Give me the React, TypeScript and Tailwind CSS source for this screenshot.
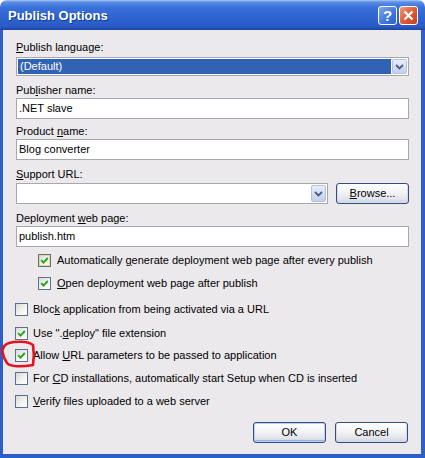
import React from "react";

function U({ c }: { c: string }) {
  return <span className="underline decoration-1 underline-offset-[1px]">{c}</span>;
}

function Box({ checked, hover }: { checked: boolean; hover?: boolean }) {
  return (
    <span className="relative w-[13px] h-[13px] shrink-0 border border-[#5A7090] bg-[linear-gradient(135deg,#D9D9D4_0%,#F4F4F2_60%,#FFFFFF_100%)] flex items-center justify-center">
      {hover && <span className="absolute inset-0 shadow-[inset_0_0_0_1px_#F6D27A]" />}
      {checked && (
        <svg width="9" height="9" viewBox="0 0 9 9" className="relative">
          <path d="M1.2 4.2 L3.5 6.6 L7.8 2" stroke="#22A31F" strokeWidth="1.9" fill="none" />
        </svg>
      )}
    </span>
  );
}

function Chevron() {
  return (
    <svg width="9" height="6" viewBox="0 0 9 6">
      <path d="M1 1 L4.5 4.5 L8 1" stroke="#4A5E82" strokeWidth="1.8" fill="none" />
    </svg>
  );
}

function DropBtn() {
  return (
    <div className="w-[15px] self-stretch rounded-[2px] border border-[#B3C1DC] bg-[linear-gradient(to_bottom,#E8EEFA,#C2D0EC)] flex items-center justify-center">
      <Chevron />
    </div>
  );
}

function XPButton({ children, def, w = "w-[73px]" }: { children: React.ReactNode; def?: boolean; w?: string }) {
  return (
    <div
      className={`${w} h-[21px] rounded-[3px] border border-[#2F4F7F] bg-[linear-gradient(to_bottom,#FFFFFF_0%,#F3F3F6_45%,#E2E4EC_80%,#C9CFDE_100%)] flex items-center justify-center text-[11px] leading-[13px] ${
        def ? "shadow-[inset_0_0_0_1px_#BCD0F2,inset_0_-1px_0_1px_#93B1E6]" : "shadow-[inset_0_-1px_0_1px_#D6DAE6]"
      }`}
    >
      {children}
    </div>
  );
}

function Label({ mt, children }: { mt: string; children: React.ReactNode }) {
  return <div className={`${mt} h-[13px] leading-[13px] whitespace-nowrap`}>{children}</div>;
}

function TextBox({ mt, value }: { mt: string; value: string }) {
  return (
    <div className={`${mt} h-[21px] border border-[#A4A9B0] bg-white flex items-center pl-[2px] leading-[13px] whitespace-nowrap`}>
      {value}
    </div>
  );
}

function Check({ mt, checked, indent, hover, children }: { mt: string; checked: boolean; indent?: boolean; hover?: boolean; children: React.ReactNode }) {
  return (
    <div className={`${mt} h-[13px] flex items-center ${indent ? "ml-[22px] gap-[6px]" : "-ml-px gap-[5px]"} leading-[13px] whitespace-nowrap`}>
      <Box checked={checked} hover={hover} />
      <span>{children}</span>
    </div>
  );
}

export default function App() {
  return (
    <div className="w-[425px] h-[458px] bg-white relative font-['Liberation_Sans',Arial,sans-serif] text-black overflow-hidden">
      {/* title bar */}
      <div className="h-[30px] rounded-t-[7px] flex items-center pl-[8px] pr-[7px] gap-[2px] bg-[linear-gradient(to_bottom,#A8C6F4_0%,#5B8FE6_7%,#3A70D9_25%,#2F63CF_60%,#2A5BC6_88%,#1C45A6_100%)]">
        <span className="flex-1 text-white font-bold text-[13px] leading-[15px] [text-shadow:1px_1px_0_#123A8F] pt-[1px]">Publish Options</span>
        <div className="w-[19px] h-[19px] rounded-[3px] border border-white bg-[linear-gradient(135deg,#7DAAF2_0%,#3C75DD_60%,#2D63CF_100%)] flex items-center justify-center text-white font-bold text-[15px] leading-none">
          ?
        </div>
        <div className="w-[19px] h-[19px] rounded-[3px] border border-white bg-[linear-gradient(135deg,#EE9A78_0%,#DB5A33_55%,#C9401D_100%)] flex items-center justify-center">
          <svg width="11" height="11" viewBox="0 0 11 11">
            <path d="M1.5 1.5 L9.5 9.5 M9.5 1.5 L1.5 9.5" stroke="#FFFFFF" strokeWidth="2.2" />
          </svg>
        </div>
      </div>

      {/* body */}
      <div className="h-[428px] bg-[#EBE9EC] border-l-[3px] border-r-[4px] border-b-[4px] border-[#2C5FC8] pl-[13px] pr-[12px] flex flex-col text-[11px]">
        <Label mt="mt-[11px]">
          <U c="P" />ublish language:
        </Label>
        <div className="mt-[3px] h-[19px] border border-[#A4A9B0] bg-white p-[1px] flex gap-[1px]">
          <div className="flex-1 bg-[#3163B4] text-white flex items-center pl-[2px] leading-[13px]">(Default)</div>
          <DropBtn />
        </div>

        <Label mt="mt-[8px]">
          Pub<U c="l" />isher name:
        </Label>
        <TextBox mt="mt-[1px]" value=".NET slave" />

        <Label mt="mt-[6px]">
          Product <U c="n" />ame:
        </Label>
        <TextBox mt="mt-[1px]" value="Blog converter" />

        <Label mt="mt-[8px]">
          <U c="S" />upport URL:
        </Label>
        <div className="mt-[2px] h-[21px] flex gap-[8px]">
          <div className="w-[312px] border border-[#A4A9B0] bg-white p-[1px] flex">
            <div className="flex-1" />
            <DropBtn />
          </div>
          <XPButton>
            <span>
              <U c="B" />rowse...
            </span>
          </XPButton>
        </div>

        <Label mt="mt-[8px]">
          Deployment <U c="w" />eb page:
        </Label>
        <TextBox mt="mt-[1px]" value="publish.htm" />

        <Check mt="mt-[7px]" checked indent hover>
          Automatically <U c="g" />enerate deployment web page after every publish
        </Check>
        <Check mt="mt-[10px]" checked indent>
          <U c="O" />pen deployment web page after publish
        </Check>
        <Check mt="mt-[13px]" checked={false}>
          Bloc<U c="k" /> application from being activated via a URL
        </Check>
        <Check mt="mt-[11px]" checked>
          Use ".<U c="d" />eploy" file extension
        </Check>
        <Check mt="mt-[9px]" checked>
          Allow <U c="U" />RL parameters to be passed to application
        </Check>
        <Check mt="mt-[10px]" checked={false}>
          For <U c="C" />D installations, automatically start Setup when CD is inserted
        </Check>
        <Check mt="mt-[10px]" checked={false}>
          <U c="V" />erify files uploaded to a web server
        </Check>

        <div className="mt-[14px] flex justify-end gap-[9px] pr-[1px]">
          <XPButton def>OK</XPButton>
          <XPButton>Cancel</XPButton>
        </div>
      </div>

      {/* red annotation circle */}
      <svg className="absolute left-0 top-[339px]" width="38" height="32" viewBox="0 0 38 32">
        <path
          d="M33 6 C28 2 16 2 9 4 C5 5 2 9 2.5 13 C3 17 5 21 7 24 C10 28 22 28 33 26 C34 20 34 12 33 6 Z"
          stroke="#E4121C"
          strokeWidth="2.6"
          fill="none"
        />
      </svg>
    </div>
  );
}
